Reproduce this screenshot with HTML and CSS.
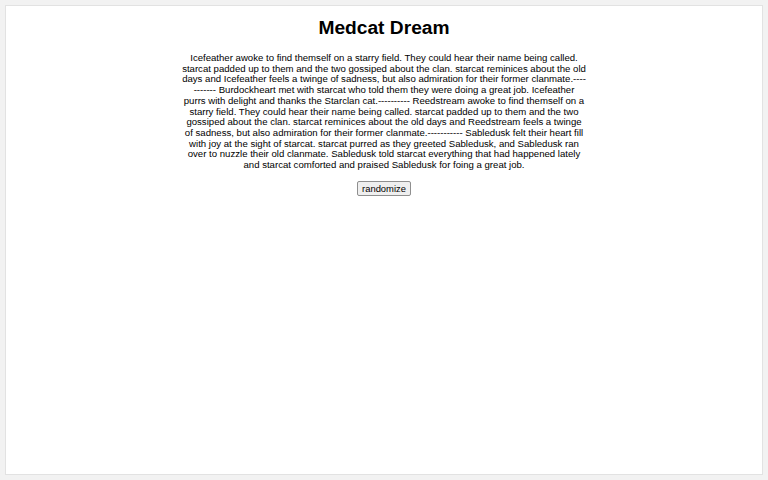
FILE: index.html
```
<!DOCTYPE html>
<html lang="en">
<head>
    <meta charset="UTF-8">
    <meta name="viewport" content="width=device-width, initial-scale=1.0">
    <title>Medcat Dream</title>
    <link rel="stylesheet" href="styles.css">
</head>
<body>
    <div class="page">
        <h1>Medcat Dream</h1>
        <p id="dream">Icefeather awoke to find themself on a starry field. They could hear their name being called. starcat padded up to them and the two gossiped about the clan. starcat reminices about the old days and Icefeather feels a twinge of sadness, but also admiration for their former clanmate.----------- Burdockheart met with starcat who told them they were doing a great job. Icefeather purrs with delight and thanks the Starclan cat.---------- Reedstream awoke to find themself on a starry field. They could hear their name being called. starcat padded up to them and the two gossiped about the clan. starcat reminices about the old days and Reedstream feels a twinge of sadness, but also admiration for their former clanmate.----------- Sabledusk felt their heart fill with joy at the sight of starcat. starcat purred as they greeted Sabledusk, and Sabledusk ran over to nuzzle their old clanmate. Sabledusk told starcat everything that had happened lately and starcat comforted and praised Sabledusk for foing a great job.</p>
        <button class="button" onclick="randomize()">randomize</button>
    </div>

    <script>
        function randomize() {
            document.getElementById("dream").scrollTop = 0;
        }
    </script>
</body>
</html>
```

FILE: styles.css
```
body {
    margin: 0;
    padding: 5px;
    background-color: #f2f2f2;
    font-family: "Liberation Sans", Arial, sans-serif;
    color: #000;
}
.page {
    background-color: #fff;
    border: 1px solid #e2e2e2;
    text-align: center;
    padding-top: 1px;
    box-sizing: border-box;
    height: 470px;
}
h1 {
    font-size: 19.2px;
    margin: 10px 0 14px;
}
#dream {
    font-size: 9.6px;
    line-height: 10.7px;
    max-width: 404px;
    margin: 0 auto 7px;
}
.button {
    font-family: "Liberation Sans", Arial, sans-serif;
    font-size: 9.4px;
    padding: 1px 4px;
    border: 1px solid #8f8f8f;
    border-radius: 2px;
    background-color: #efefef;
}
```
